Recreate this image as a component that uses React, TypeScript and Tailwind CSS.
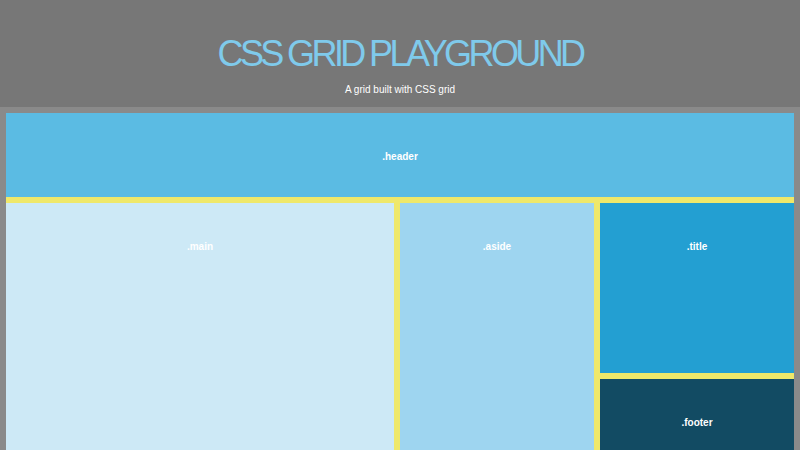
import React from 'react';

// Grid areas for the playground layout
const cells = [
  { label: '.header', area: 'col-span-3', bg: 'bg-[#5bbbe3]' },
  { label: '.main', area: 'row-span-2', bg: 'bg-[#cde9f6]' },
  { label: '.aside', area: 'row-span-2', bg: 'bg-[#9ed5f0]' },
  { label: '.title', area: '', bg: 'bg-[#239fd2]' },
  { label: '.footer', area: '', bg: 'bg-[#124b63]' },
];

export default function App() {
  return (
    <div className="min-h-screen bg-[#777777] font-['Liberation_Sans',Arial,sans-serif]">
      {/* Page heading */}
      <header className="h-[107px] flex flex-col items-center pt-[34px]">
        <h1 className="text-[36px] leading-[40px] tracking-[-0.1em] text-[#7fcaeb]">
          CSS GRID PLAYGROUND
        </h1>
        <p className="mt-[10px] text-[10px] leading-[12px] text-white">A grid built with CSS grid</p>
      </header>

      {/* Grid container */}
      <section className="bg-[#8a8a8a] p-[6px]">
        <div className="grid grid-cols-[2fr_1fr_1fr] grid-rows-[84px_170px_84px] gap-[6px] bg-[#efe86a]">
          {cells.map((cell) => (
            <div
              key={cell.label}
              className={`${cell.area} ${cell.bg} pt-[37px] text-center text-[10px] leading-[14px] font-bold text-white`}
            >
              {cell.label}
            </div>
          ))}
        </div>
      </section>
    </div>
  );
}
